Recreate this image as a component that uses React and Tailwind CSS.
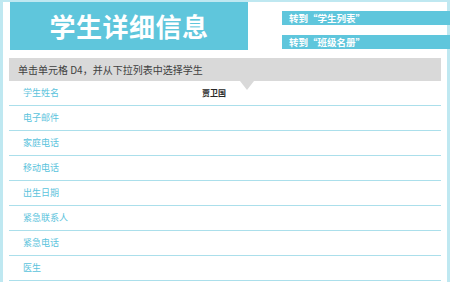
import React from "react";

const FONT = { fontFamily: '"Noto Sans CJK SC", "Noto Sans", sans-serif' };

const fields = ["学生姓名", "电子邮件", "家庭电话", "移动电话", "出生日期", "紧急联系人", "紧急电话", "医生"];

const App = () => {
  return (
    <div className="w-[450px] h-[282px] overflow-hidden bg-[#bfe8f1] px-[3px] pt-[2px]" style={FONT}>
      <div className="bg-white h-full">
        <div className="flex">
          <div className="ml-[7px] w-[238px] h-[48px] bg-[#5fc6dc] flex items-center justify-center">
            <span className="text-white font-bold text-[26px] leading-none tracking-[0.5px]">学生详细信息</span>
          </div>
          <div className="ml-[34px] -mr-[3px] flex-1 pt-[9px] flex flex-col gap-[10px]">
            <div className="h-[14px] bg-[#5fc6dc] text-white font-bold text-[9.5px] leading-[14px] pl-[7px]">转到“学生列表”</div>
            <div className="h-[14px] bg-[#5fc6dc] text-white font-bold text-[9.5px] leading-[14px] pl-[7px]">转到“班级名册”</div>
          </div>
        </div>
        <div className="mx-[6px] mt-[8px]">
          <div className="relative h-[23px] bg-[#d9d9d9] text-[#404040] text-[10px] leading-[23px] pl-[9px]">
            单击单元格 D4，并从下拉列表中选择学生
            <div className="absolute left-[231px] top-[23px] w-0 h-0 border-l-[7px] border-r-[7px] border-t-[9px] border-l-transparent border-r-transparent border-t-[#d9d9d9]" />
          </div>
          {fields.map((f, i) => (
            <div key={f} className="flex items-center h-[25px] border-b border-[#abdfeb]">
              <span className="w-[193px] pl-[14px] text-[9px] text-[#5bc3dc]">{f}</span>
              {i === 0 && <span className="text-[8px] text-[#262626] font-bold">贾卫国</span>}
            </div>
          ))}
        </div>
      </div>
    </div>
  );
};

export default App;
